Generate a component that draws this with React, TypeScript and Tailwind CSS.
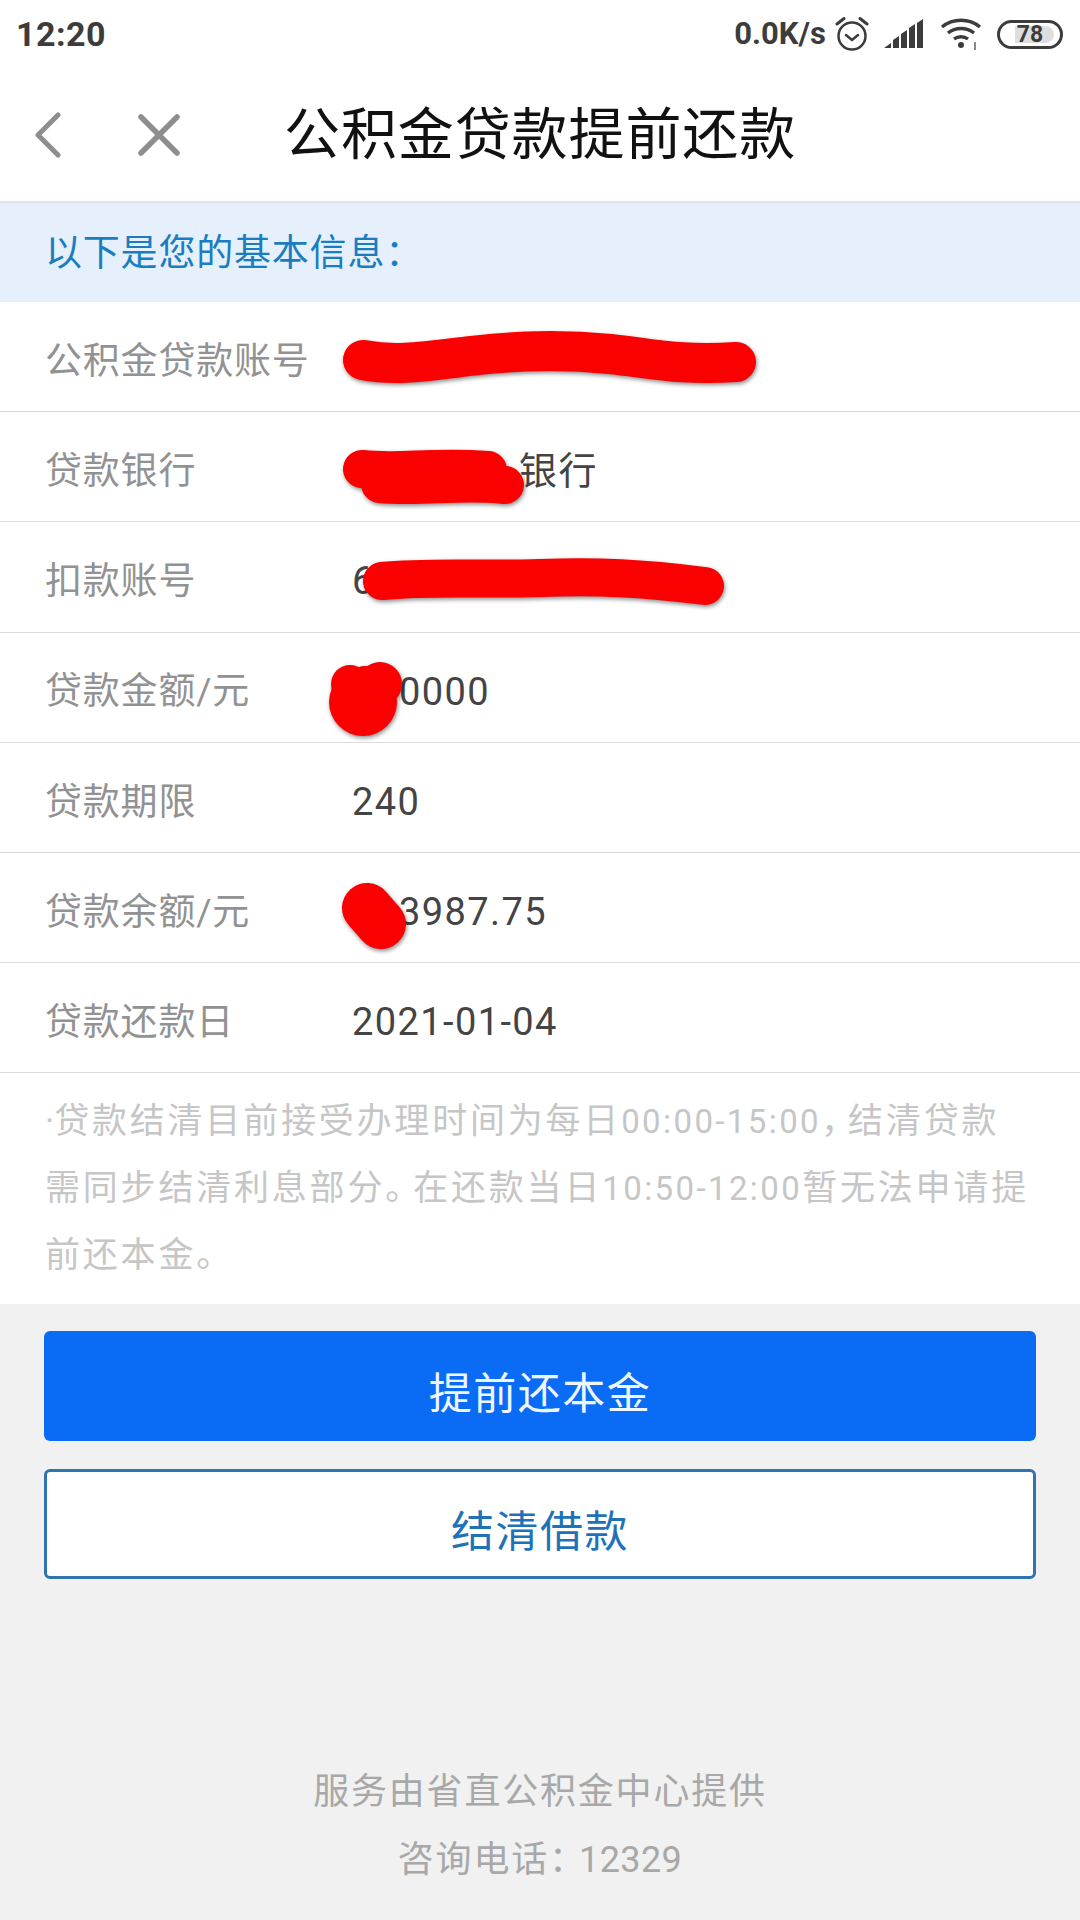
import React from 'react';

const cjk = "font-['Roboto','Noto_Sans_CJK_SC',sans-serif]";

const rows: { label: string; value: string; pad?: string }[] = [
  { label: '公积金贷款账号', value: '' },
  { label: '贷款银行', value: '银行', pad: 'pl-[167px]' },
  { label: '扣款账号', value: '6' },
  { label: '贷款金额/元', value: '0000', pad: 'pl-[47px]' },
  { label: '贷款期限', value: '240' },
  { label: '贷款余额/元', value: '3987.75', pad: 'pl-[47px]' },
  { label: '贷款还款日', value: '2021-01-04' },
];

const StatusBar: React.FC = () => (
  <div className="flex h-[66px] items-center justify-between pl-[16px] pr-[17px] pt-[2px] text-[#3c3c3c]">
    <span className="text-[34px] font-bold tracking-[0.5px]">12:20</span>
    <div className="flex items-center">
      <span className="text-[31px] font-bold">0.0K/s</span>
      <svg className="ml-[9px]" width="34" height="36" viewBox="0 0 34 36" fill="none" stroke="#3c3c3c" strokeWidth="2.5">
        <circle cx="17" cy="20" r="13.5" />
        <path d="M11 19l6 5 6-5" strokeLinecap="round" strokeLinejoin="round" />
        <path d="M2 8l7-5.5M32 8l-7-5.5" strokeWidth="3" strokeLinecap="round" />
      </svg>
      <svg className="ml-[15px]" width="40" height="30" viewBox="0 0 40 30" fill="#3c3c3c">
        <path d="M0 29l7-5v5zM9 21l6-4v12H9zM17 15l6-4v18h-6zM25 9l6-4v24h-6zM33 4l6-4v29h-6z" />
      </svg>
      <svg className="ml-[16px]" width="42" height="33" viewBox="0 0 42 33" fill="none" stroke="#3c3c3c" strokeWidth="3.4">
        <path d="M2 9c11-9 27-9 38 0" />
        <path d="M8 15c7.500-6 18.500-6 26 0" />
        <path d="M14 21c4-3 10-3 14 0" />
        <circle cx="21" cy="27" r="3" fill="#3c3c3c" stroke="none" />
        <path d="M35 24v8" stroke="#8a8a8a" strokeWidth="2" />
      </svg>
      <div className="relative ml-[15px] flex h-[29px] w-[66px] items-center justify-center rounded-full border-[3px] border-[#3c3c3c]">
        <div className="absolute bottom-[3px] left-[15px] top-[3px] w-[39px] rounded-r-full bg-[#dedede]" />
        <span className="relative text-[23px] font-bold leading-none">78</span>
      </div>
    </div>
  </div>
);

const Header: React.FC = () => (
  <div className="flex h-[137px] items-center border-b-2 border-[#dfe3e8] pl-[34px] pt-[2px]">
    <svg width="28" height="46" viewBox="0 0 28 46" fill="none" stroke="#8e8e8e" strokeWidth="5" strokeLinecap="round" strokeLinejoin="round">
      <path d="M24 3L4 23l20 20" />
    </svg>
    <svg className="ml-[76px]" width="42" height="42" viewBox="0 0 42 42" fill="none" stroke="#8e8e8e" strokeWidth="5.500" strokeLinecap="round">
      <path d="M3 3l36 36M39 3L3 39" />
    </svg>
    <h1 className="ml-[104px] text-[56px] font-normal leading-none tracking-[0.9px] text-[#111]">公积金贷款提前还款</h1>
  </div>
);

const Row: React.FC<{ label: string; value: string; pad?: string }> = ({ label, value, pad }) => (
  <div className="flex h-[110.2px] items-center border-b border-[#dcdcdc] pl-[45px] pt-[10px]">
    <span className="w-[307px] shrink-0 text-[37px] tracking-[0.8px] text-[#929292]">{label}</span>
    <span className={`text-[38px] tracking-[1.4px] text-[#444] ${pad ?? ''}`}>{value}</span>
  </div>
);

// the red marker strokes painted over the private values
const Redactions: React.FC = () => (
  <svg className="absolute left-0 top-0 drop-shadow-[1px_2px_2px_rgba(0,0,0,0.45)]" width="1080" height="1920" viewBox="0 0 1080 1920" fill="none" stroke="#fa0000" strokeLinecap="round" strokeLinejoin="round">
    <path d="M363 360C395 366 420 362 470 356S570 350 610 354S680 366 736 362" strokeWidth="40" />
    <path d="M362 469C400 473 430 466 488 470" strokeWidth="38" />
    <path d="M380 484C420 488 460 480 505 485" strokeWidth="38" />
    <path d="M382 581C430 576 480 580 540 578S640 578 705 586" strokeWidth="38" />
    <g fill="#fa0000" stroke="none">
      <circle cx="363" cy="702" r="34" />
      <circle cx="380" cy="684" r="22" />
      <circle cx="350" cy="684" r="19" />
      <circle cx="365" cy="684" r="18" />
    </g>
    <path d="M367 908L381 924" strokeWidth="50" />
  </svg>
);

const App: React.FC = () => (
  <div className={`relative flex min-h-[1920px] w-[1080px] flex-col bg-[#f1f1f1] ${cjk}`}>
    <div className="bg-white">
      <StatusBar />
      <Header />
      <div className="flex h-[99px] items-center bg-[#e5f0fc] pl-[45px] pt-[2px] text-[37px] tracking-[0.8px] text-[#1a7dc0]">以下是您的基本信息：</div>
      {rows.map((r) => (
        <Row key={r.label} {...r} />
      ))}
      <p className="h-[231px] px-[45px] pt-[15px] text-[35px] leading-[67px] tracking-[2.800px] text-[#c6c6c6]">
        <span className="tracking-[0px]">·</span>贷款结清目前接受办理时间为每日<span className="text-[33px] tracking-[2.400px]">00:00-15:00</span><span className="tracking-[-8px]">，</span>结清贷款需同步结清利息部分<span className="tracking-[-7px]">。</span>在还款当日<span className="text-[33px] tracking-[2.400px]">10:50-12:00</span>暂无法申请提前还本金。
      </p>
    </div>
    <div className="flex flex-col items-center px-[44px] pt-[27px]">
      <button className="flex h-[110px] w-full items-center justify-center rounded-[6px] bg-[#0a6cf5] pt-[16px] text-[43px] tracking-[1.500px] text-[#eef6ff]">提前还本金</button>
      <button className="mt-[28px] flex h-[110px] w-full items-center justify-center rounded-[6px] border-[3px] border-[#2e74b0] bg-white pt-[16px] text-[43px] tracking-[1.500px] text-[#1f72b8]">结清借款</button>
      <div className="mt-[186px] text-[36px] tracking-[1.800px] text-[#a8a8a8]">服务由省直公积金中心提供</div>
      <div className="mt-[14px] text-[36px] tracking-[1.800px] text-[#a8a8a8]">咨询电话<span className="tracking-[-6px]">：</span><span className="tracking-[0.4px]">12329</span></div>
    </div>
    <Redactions />
  </div>
);

export default App;
